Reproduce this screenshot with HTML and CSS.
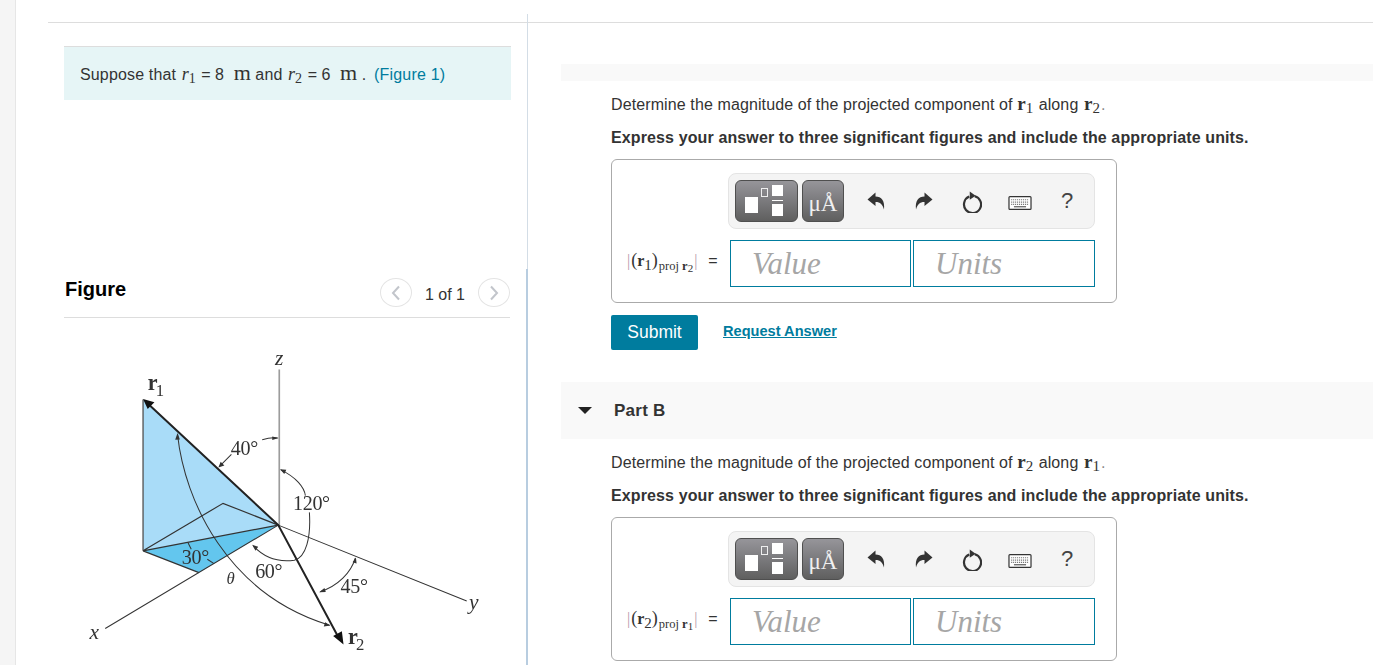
FILE: index.html
```html
<!DOCTYPE html>
<html lang="en">
<head>
<meta charset="utf-8">
<title>Projected component</title>
<link rel="stylesheet" href="styles.css">
</head>
<body>
<svg class="defs" width="0" height="0" aria-hidden="true">
  <symbol id="i-undo" viewBox="0 0 20 20"><path d="M1.5 8.5 L9.5 1.5 V5.5 C15.5 5.5 19 9.5 18 18.5 C16.5 13.5 14.5 11 9.5 11 V15 Z" fill="#333"/></symbol>
  <symbol id="i-redo" viewBox="0 0 20 20"><path d="M18.5 8.5 L10.5 1.5 V5.5 C4.5 5.5 1 9.5 2 18.5 C3.5 13.5 5.5 11 10.5 11 V15 Z" fill="#333"/></symbol>
  <symbol id="i-reset" viewBox="0 0 22 24"><path d="M8 6 A9.4 9.4 0 1 0 14 5.6" fill="none" stroke="#333" stroke-width="2.4"/><path d="M8.5 0.5 L15 5 L8.5 9.5 Z" fill="#333"/></symbol>
  <symbol id="i-keys" viewBox="0 0 25 15"><rect x="0.7" y="0.7" width="23.6" height="13.6" rx="1" fill="#fff" stroke="#333" stroke-width="1.3"/><path d="M3 4h19M3 6.5h19M3 9h19" stroke="#777" stroke-width="1.3" stroke-dasharray="1.2 0.9"/><path d="M6 11.5h13" stroke="#666" stroke-width="1.4"/></symbol>
  <symbol id="i-prev" viewBox="0 0 10 16"><path d="M8 1.5 L2 8 L8 14.5" fill="none" stroke="#c2c5cb" stroke-width="2"/></symbol>
  <symbol id="i-next" viewBox="0 0 10 16"><path d="M2 1.5 L8 8 L2 14.5" fill="none" stroke="#c2c5cb" stroke-width="2"/></symbol>
</svg>
<div class="rail"></div>
<main class="main">
  <div class="columns">
    <section class="left">
      <div class="intro">Suppose that <span class="mi">r</span><sub class="ms">1</sub> <span class="eq-in">= 8</span> <span class="unit">m</span> and <span class="mi">r</span><sub class="ms">2</sub> <span class="eq-in">= 6</span> <span class="unit">m</span> . <a class="fig-link">(Figure 1)</a></div>
      <header class="figure-head">
        <h2 class="figure-title">Figure</h2>
        <div class="pager">
          <span class="pager-btn"><svg class="chev"><use href="#i-prev"/></svg></span>
          <span class="pager-text">1 of 1</span>
          <span class="pager-btn"><svg class="chev"><use href="#i-next"/></svg></span>
        </div>
      </header>
      <svg class="diagram" viewBox="0 0 1404 971" width="470" height="325" role="img" aria-label="Vectors r1 and r2 on xyz axes">
        <g class="soft">
          <path d="M248 178 L652 553 L415 695 L248 630 Z" fill="#a9dcf8"/>
          <path d="M248 630 L652 553 L415 695 Z" fill="#63c6ee"/>
          <path d="M655 88 V553" stroke="#9c9c9c" stroke-width="5" fill="none"/>
          <path d="M248 178 V630" stroke="#555" stroke-width="4" fill="none"/>
          <path d="M248 630 L652 553 M248 630 L487 488 L652 553 M248 630 L415 695" stroke="#333" stroke-width="3.5" fill="none"/>
          <path d="M135 862 L652 553 M652 553 L1215 780" stroke="#333" stroke-width="3" fill="none"/>
          <path d="M262 190 L652 553 L830 885" stroke="#222" stroke-width="6" fill="none"/>
          <path d="M248 176 L282 186 L262 206 Z M847 910 L816 884 L842 870 Z" fill="#111"/>
          <path d="M351 282 C372 480 500 760 805 852" stroke="#333" stroke-width="3" fill="none"/>
          <path d="M351 278 L344 298 L358 297 Z M808 853 L788 856 L792 843 Z" fill="#333"/>
          <path d="M478 376 L512 342 M604 298 Q630 290 650 293" stroke="#333" stroke-width="3" fill="none"/>
          <path d="M473 381 L480 364 L491 375 Z M653 293 L634 288 L634 299 Z" fill="#333"/>
          <path d="M660 388 C705 410 730 440 733 465 M745 515 C750 590 735 650 700 658 C650 665 610 650 578 616" stroke="#333" stroke-width="3" fill="none"/>
          <path d="M657 386 L676 388 L670 400 Z M574 612 L592 618 L584 630 Z" fill="#333"/>
          <path d="M778 752 C830 735 870 695 882 652" stroke="#333" stroke-width="3" fill="none"/>
          <path d="M774 754 L790 741 L794 753 Z M884 650 L886 668 L874 664 Z" fill="#333"/>
          <path d="M382 605 L392 625 M440 655 L460 668" stroke="#333" stroke-width="3" fill="none"/>
        </g>
        <g class="soft">
          <text class="d-ital" x="642" y="76">z</text>
          <text class="d-ital" x="88" y="892">x</text>
          <text class="d-ital" x="1222" y="804">y</text>
          <text class="d-bold" x="262" y="150">r</text><text class="d-sub" x="286" y="168">1</text>
          <text class="d-bold" x="860" y="908">r</text><text class="d-sub" x="884" y="927">2</text>
          <text class="d-num" x="510" y="343">40°</text>
          <text class="d-num" x="696" y="508">120°</text>
          <text class="d-num" x="364" y="670">30°</text>
          <text class="d-num" x="583" y="712">60°</text>
          <text class="d-num" x="838" y="755">45°</text>
          <text class="d-theta" x="497" y="728">θ</text>
        </g>
      </svg>
    </section>
    <section class="right">
      <div class="strip-top"></div>
      <div class="part-body">
        <p class="prompt">Determine the magnitude of the projected component of <b class="mb">r</b><sub class="ms ms-b">1</sub> <span class="along">along</span> <b class="mb">r</b><sub class="ms ms-b">2</sub><span class="dot">.</span></p>
        <p class="instr">Express your answer to three significant figures and include the appropriate units.</p>
        <div class="answer">
          <div class="toolbar">
            <span class="tool tool-tpl">
              <span class="tpl-big"></span><span class="tpl-sup"></span>
              <span class="tpl-frac"><span class="tpl-num"></span><span class="tpl-bar"></span><span class="tpl-den"></span></span>
            </span>
            <span class="tool tool-unit">μÅ</span>
            <svg class="ic ic-undo"><use href="#i-undo"/></svg>
            <svg class="ic ic-redo"><use href="#i-redo"/></svg>
            <svg class="ic ic-reset"><use href="#i-reset"/></svg>
            <svg class="ic ic-keys"><use href="#i-keys"/></svg>
            <span class="ic-help">?</span>
          </div>
          <div class="entry">
            <span class="label"><i class="bar">|</i><span class="paren">(</span><b>r</b><sub class="l1">1</sub><span class="paren">)</span><sub class="l2">proj <b>r</b><sub class="l3">2</sub></sub><i class="bar">|</i><span class="eq">=</span></span>
            <input class="field" placeholder="Value">
            <input class="field field-2" placeholder="Units">
          </div>
        </div>
        <div class="actions">
          <button class="submit">Submit</button>
          <a class="request">Request Answer</a>
        </div>
      </div>
      <div class="part-head">
        <span class="caret"></span>
        <h3 class="part-title">Part B</h3>
      </div>
      <div class="part-body part-body-b">
        <p class="prompt">Determine the magnitude of the projected component of <b class="mb">r</b><sub class="ms ms-b">2</sub> <span class="along">along</span> <b class="mb">r</b><sub class="ms ms-b">1</sub><span class="dot">.</span></p>
        <p class="instr">Express your answer to three significant figures and include the appropriate units.</p>
        <div class="answer">
          <div class="toolbar">
            <span class="tool tool-tpl">
              <span class="tpl-big"></span><span class="tpl-sup"></span>
              <span class="tpl-frac"><span class="tpl-num"></span><span class="tpl-bar"></span><span class="tpl-den"></span></span>
            </span>
            <span class="tool tool-unit">μÅ</span>
            <svg class="ic ic-undo"><use href="#i-undo"/></svg>
            <svg class="ic ic-redo"><use href="#i-redo"/></svg>
            <svg class="ic ic-reset"><use href="#i-reset"/></svg>
            <svg class="ic ic-keys"><use href="#i-keys"/></svg>
            <span class="ic-help">?</span>
          </div>
          <div class="entry">
            <span class="label"><i class="bar">|</i><span class="paren">(</span><b>r</b><sub class="l1">2</sub><span class="paren">)</span><sub class="l2">proj <b>r</b><sub class="l3">1</sub></sub><i class="bar">|</i><span class="eq">=</span></span>
            <input class="field" placeholder="Value">
            <input class="field field-2" placeholder="Units">
          </div>
        </div>
      </div>
    </section>
  </div>
</main>
</body>
</html>
```
FILE: styles.css
```css
* { box-sizing: border-box; }
html, body { margin: 0; height: 665px; overflow: hidden; background: #fff; }
body { display: flex; font-family: "Liberation Sans", Arial, sans-serif; font-size: 16px; color: #333; }
.defs { position: absolute; }
.rail { width: 16px; flex: none; background: #f5f5f5; border-right: 1px solid #e6e6e6; }
.main { flex: 1; padding: 14px 0 0 30px; min-width: 0; }
.columns { position: relative; display: flex; height: 651px; }
.columns::before { content: ""; position: absolute; left: 2px; right: 0; top: 8px; height: 1px; background: #ddd; }

.left { position: relative; width: 482px; flex: none; padding: 32px 16px 0 18px; border-right: 1px solid #d3dde6; }
.left::after { content: ""; position: absolute; right: -1px; top: 255px; bottom: 0; width: 2px; background: #b8cde0; }
.intro { height: 54px; padding: 18px 16px 0; background: #e6f5f6; border-top: 1px solid #ddd; line-height: 20px; white-space: nowrap; letter-spacing: 0.15px; }
.mi { font: italic 18px/0 "Liberation Serif", serif; margin-left: 1px; letter-spacing: 0; }
.eq-in { margin-left: 1px; letter-spacing: 0; }
.unit { font: 22px/0 "Liberation Serif", serif; margin: 0 0 0 5px; letter-spacing: 0; }
.ms { font: 14px/0 "Liberation Serif", serif; vertical-align: -3px; letter-spacing: 0; }
.fig-link { color: #007c9e; margin-left: 3px; letter-spacing: 0.2px; }

.figure-head { display: flex; align-items: flex-start; justify-content: space-between; height: 42px; margin-top: 176px; border-bottom: 1px solid #ddd; margin-right: 1px; }
.figure-title { margin: 1px 0 0 1px; font-size: 20px; line-height: 24px; color: #000; font-weight: 700; }
.pager { display: flex; align-items: flex-start; gap: 13px; margin-top: 2px; }
.pager-btn { display: flex; align-items: center; justify-content: center; width: 32px; height: 29px; border: 1px solid #e4e4e4; border-radius: 50%; }
.chev { width: 10px; height: 16px; display: block; }
.pager-text { margin-top: 7px; font-size: 16px; line-height: 20px; color: #333; }
.diagram { display: block; margin: 22px 0 0 -4px; }
.soft { filter: blur(1.1px); }
.d-ital { font: italic 64px "Liberation Serif", serif; fill: #333; }
.d-bold { font: bold 66px "Liberation Serif", serif; fill: #333; }
.d-sub { font: 50px "Liberation Serif", serif; fill: #333; }
.d-num { font: 60px "Liberation Serif", serif; fill: #333; letter-spacing: -1px; }
.d-theta { font: italic 50px "Liberation Serif", serif; fill: #333; }

.right { flex: 1; min-width: 0; padding: 50px 0 0 33px; }
.strip-top { height: 17px; background: #f9f9f9; }
.part-body { padding: 0 0 0 50px; }
.prompt { margin: 14px 0 0; height: 20px; line-height: 20px; white-space: nowrap; letter-spacing: 0.11px; }
.instr { margin: 13px 0 0; font-weight: 700; line-height: 20px; white-space: nowrap; letter-spacing: 0.12px; }
.mb { font: bold 19px/0 "Liberation Serif", serif; letter-spacing: 0; }
.ms-b { font-size: 15px; }
.along { margin: 0 1px; }
.dot { color: #888; margin-left: 1px; }

.answer { width: 506px; height: 144px; margin-top: 11px; padding: 13px 21px 0 0; border: 1px solid #aaa; border-radius: 6px; }
.toolbar { display: flex; align-items: center; width: 367px; height: 56px; margin-left: 116px; padding-left: 6px; background: #f4f4f4; border: 1px solid #e4e4e4; border-radius: 8px; }
.tool { display: block; flex: none; position: relative; height: 42px; background: linear-gradient(#96959a, #5f5f5f); border: 1px solid #4f4f4f; border-radius: 6px; }
.tool-tpl { width: 63px; }
.tool-unit { width: 42px; margin-left: 4px; color: #f0f0f0; font: 23px/46px "Liberation Serif", serif; text-align: center; white-space: nowrap; }
.tpl-big { position: absolute; left: 9px; top: 16px; width: 13px; height: 16px; background: #fff; }
.tpl-sup { position: absolute; left: 25px; top: 7px; width: 7px; height: 9px; border: 1px solid #eee; }
.tpl-frac { position: absolute; left: 36px; top: 4px; width: 11px; display: flex; flex-direction: column; }
.tpl-num { width: 11px; height: 11px; background: #fff; }
.tpl-den { width: 11px; height: 12px; background: #fff; }
.tpl-bar { height: 1px; margin: 4px 0 3px; background: #fff; }
.ic { flex: none; display: block; }
.ic-undo { width: 20px; height: 20px; margin-left: 22px; }
.ic-redo { width: 20px; height: 20px; margin-left: 28px; }
.ic-reset { width: 20px; height: 22px; margin: 2px 0 0 28px; }
.ic-keys { width: 24px; height: 14px; margin: 3px 0 0 26px; }
.ic-help { margin-left: 29px; font-size: 22px; color: #444; }

.entry { display: flex; align-items: center; height: 47px; margin-top: 11px; }
.label { width: 118px; flex: none; padding: 0 0 6px 14px; font: 16px "Liberation Serif", serif; white-space: nowrap; }
.label b { font-weight: 700; }
.bar { font-style: normal; color: #b9a; margin: 0 1px; }
.paren { font-size: 18px; }
.label sub { line-height: 0; }
.l1 { font-size: 15px; }
.l2 { font-size: 12.5px; margin-left: 1px; }
.l3 { font-size: 11px; vertical-align: -2px; }
.eq { margin-left: 10px; font-family: "Liberation Sans", sans-serif; }
.field { width: 181px; height: 47px; flex: none; padding: 0 0 0 21px; border: 1px solid #007c9e; border-radius: 0; background: #fff; font: italic 31px "Liberation Serif", serif; color: #333; }
.field::placeholder { color: #a6a6a6; opacity: 1; }
.field-2 { width: 182px; margin-left: 2px; }

.actions { display: flex; align-items: center; margin-top: 12px; }
.submit { width: 87px; height: 35px; border: 0; border-radius: 2px; background: #007c9e; color: #fff; font: 17.5px "Liberation Sans", sans-serif; }
.request { margin: 0 0 3px 25px; color: #007c9e; font-weight: 700; font-size: 14.6px; text-decoration: underline; }

.part-head { display: flex; align-items: center; height: 57px; margin-top: 32px; padding-left: 17px; background: #f9f9f9; }
.caret { width: 0; height: 0; border-left: 7px solid transparent; border-right: 7px solid transparent; border-top: 7px solid #222; }
.part-title { margin: 0 0 0 22px; font-size: 17px; letter-spacing: 0.25px; font-weight: 700; color: #333; }
.part-body-b .prompt { margin-top: 14px; }
```
